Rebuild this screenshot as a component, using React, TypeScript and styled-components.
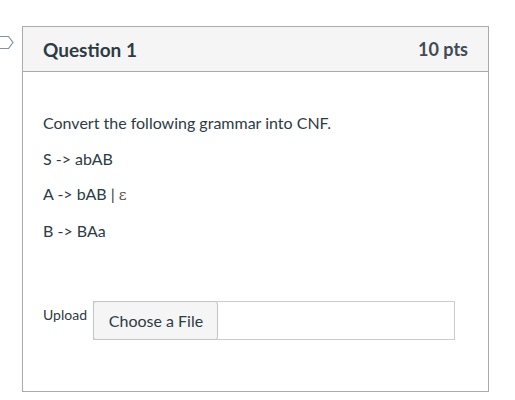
import React from 'react'
import styled, { createGlobalStyle } from 'styled-components'

const GlobalStyle = createGlobalStyle`
  body {
    margin: 0;
    background: #ffffff;
    font-family: Lato, "Open Sans", "Liberation Sans", sans-serif;
    color: #2d3b45;
  }
`

const Page = styled.div`
  position: relative;
  padding: 26px 0 0 22px;
`

const Flag = styled.svg`
  position: absolute;
  left: 0;
  top: 35px;
`

const QuestionCard = styled.div`
  width: 467px;
  height: 366px;
  box-sizing: border-box;
  border: 1px solid #aaaaaa;
  display: flex;
  flex-direction: column;
`

const Header = styled.div`
  height: 44px;
  background: #f5f5f5;
  border-bottom: 1px solid #aaaaaa;
  display: flex;
  align-items: center;
  justify-content: space-between;
  padding: 0 20px;
`

const Title = styled.span<{ $size: number }>`
  font-size: ${({ $size }) => $size}px;
  font-weight: 700;
  color: ${({ color }) => color || '#2d3b45'};
`

const Body = styled.div`
  padding: 39px 20px 0;
`

const Line = styled.p`
  margin: 0 0 11.5px;
  font-size: 16px;
  line-height: 24px;
`

const Epsilon = styled.span`
  font-family: "DejaVu Serif", serif;
  font-size: 15px;
  color: #5a4a3a;
`

const UploadRow = styled.div`
  display: flex;
  align-items: flex-start;
  gap: 6px;
  margin-top: 58px;
`

const Label = styled.label`
  font-size: 14px;
  line-height: 20px;
  padding-top: 4px;
`

const FileBox = styled.div`
  width: 362px;
  height: 39px;
  box-sizing: border-box;
  border: 1px solid #c7cdd1;
  display: flex;
`

const ChooseButton = styled.button`
  margin: -1px 0 -1px -1px;
  width: 125px;
  height: 39px;
  background: #f5f5f5;
  border: 1px solid #c0c5ca;
  border-radius: 3px;
  font-family: inherit;
  font-size: 16px;
  color: #2d3b45;
  padding: 0 0 0 1px;
`

const App = () => {
  return (
    <Page>
      <GlobalStyle />
      <Flag width="14" height="15" viewBox="0 0 14 15">
        <path d="M-2 1.5 H8.5 L13 7.5 L8.5 13.5 H-2" fill="none" stroke="#7f93a5" strokeWidth="1.2" />
      </Flag>
      <QuestionCard>
        <Header>
          <Title $size={19}>Question 1</Title>
          <Title $size={18} color="#3f4b55">10 pts</Title>
        </Header>
        <Body>
          <Line>Convert the following grammar into CNF.</Line>
          <Line>S -&gt; abAB</Line>
          <Line>
            A -&gt; bAB | <Epsilon>ε</Epsilon>
          </Line>
          <Line>B -&gt; BAa</Line>
          <UploadRow>
            <Label>Upload</Label>
            <FileBox>
              <ChooseButton type="button">Choose a File</ChooseButton>
            </FileBox>
          </UploadRow>
        </Body>
      </QuestionCard>
    </Page>
  )
}

export default App
